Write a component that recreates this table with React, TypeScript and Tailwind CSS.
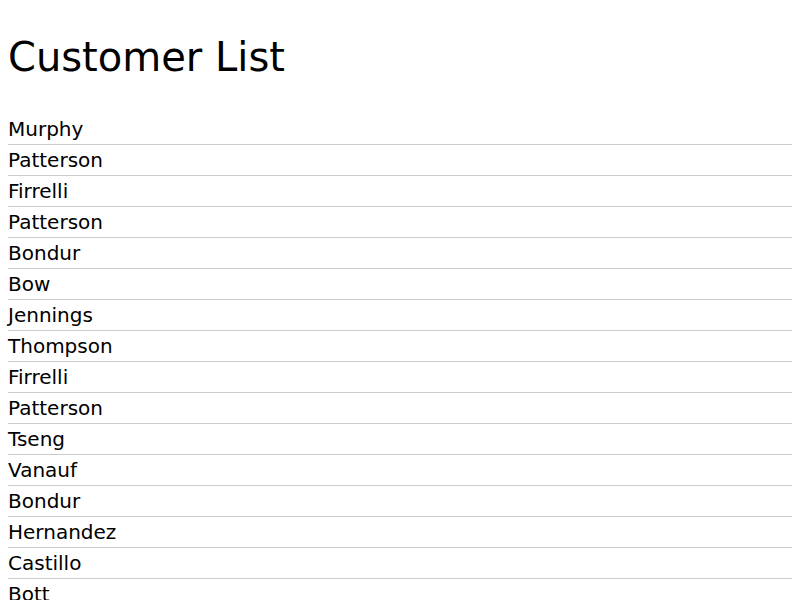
const names = [
  "Murphy","Patterson","Firrelli","Patterson","Bondur","Bow","Jennings","Thompson","Firrelli","Patterson","Tseng","Vanauf","Bondur","Hernandez","Castillo","Bott","Jones","Gerard","King","Marsh","Fixter","Nishi","Kato","Gerard",
];

export default function App() {
  return (
    <div className="bg-white px-2 text-black" style={{ fontFamily: '"DejaVu Sans", sans-serif' }}>
      <h1 className="pt-[34px] text-[40px] leading-[46px] mb-[34px]">Customer List</h1>
      <ul>
        {names.map((n, i) => (
          <li key={i} className="border-b border-[#cccccc] h-[31px] pt-[4px] text-[20px] leading-[22px]">{n}</li>
        ))}
      </ul>
    </div>
  );
}
